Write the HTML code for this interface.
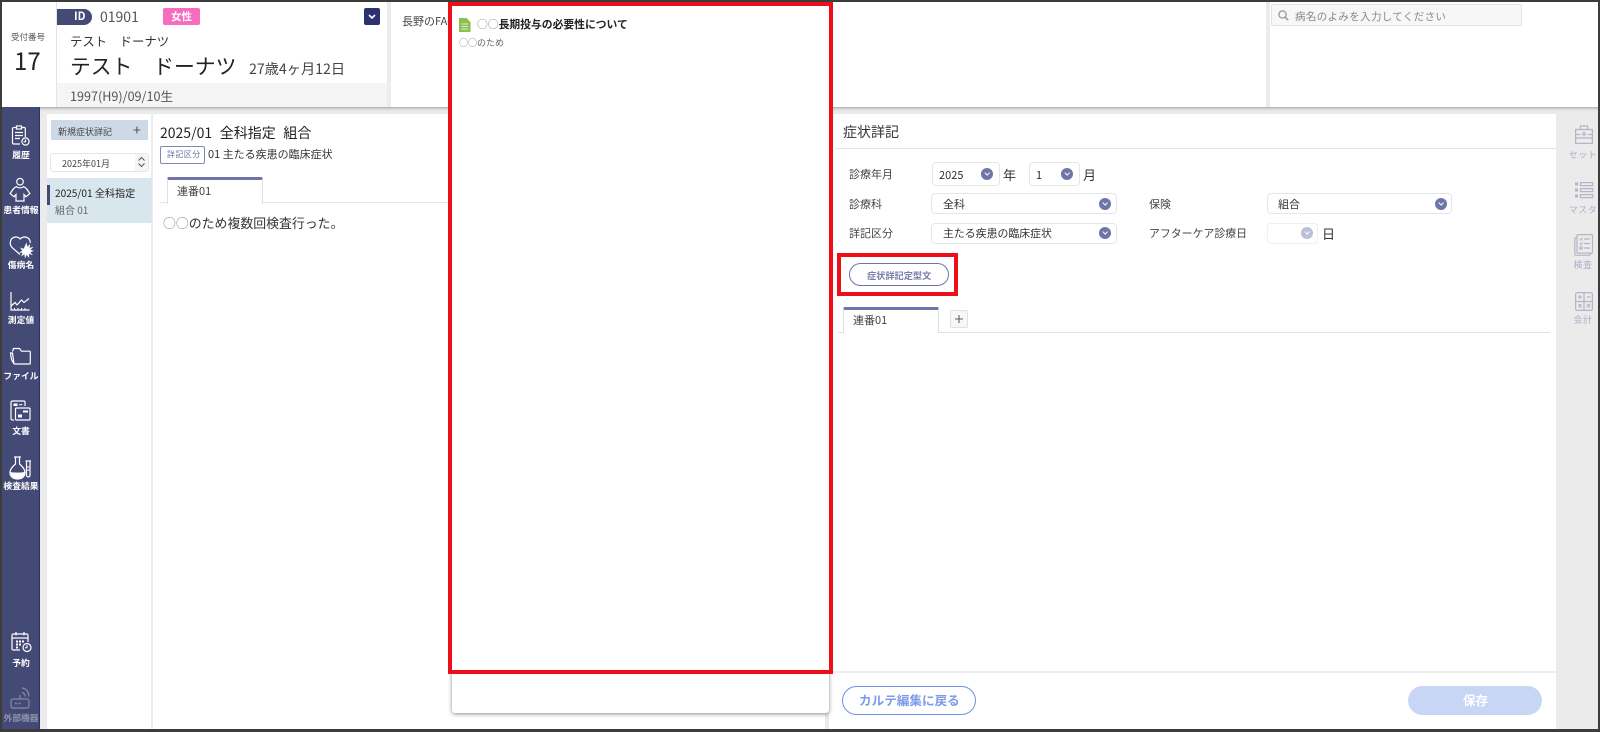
<!DOCTYPE html>
<html lang="ja"><head><meta charset="utf-8"><title>症状詳記</title>
<style>
html,body{margin:0;padding:0;width:1600px;height:732px;overflow:hidden;background:#ebebeb}
body{position:relative;font-family:"Noto Sans CJK JP","Liberation Sans",sans-serif;color:#333;filter:blur(.3px)}
.b{position:absolute;box-sizing:border-box}
.t{position:absolute;white-space:nowrap;line-height:1}
.s{position:absolute;box-sizing:border-box;background:#fff;border:1px solid #e6e6e6;border-radius:4px}
.c{position:absolute;width:12px;height:12px;border-radius:50%;background:#6f75a8}
.c:after{content:"";position:absolute;left:3.6px;top:2.6px;width:3.4px;height:3.4px;border:solid #fff;border-width:0 1.5px 1.5px 0;transform:rotate(45deg);box-sizing:content-box}
.n{position:absolute;left:2px;width:38px;text-align:center;color:#fff;font-size:8.8px;font-weight:700;line-height:1;white-space:nowrap}
.r{position:absolute;left:1562px;width:42px;text-align:center;color:#aeaccb;font-size:9px;line-height:1;white-space:nowrap;letter-spacing:.5px}
.o{color:#888;font-weight:400}
svg{position:absolute;overflow:visible}
.w{fill:none;stroke:#fff;stroke-width:1.2}
.g{fill:none;stroke:#b5b5c6;stroke-width:1.2}
</style></head><body>

<!-- right tools background (under header shadow) -->
<div class="b" style="left:1556px;top:107px;width:42px;height:623px;background:#ebebeb"></div>

<!-- header -->
<div class="b" style="left:0;top:0;width:1600px;height:107px;background:#fff;box-shadow:0 1px 3px rgba(0,0,0,.35)"></div>
<div class="b" style="left:56px;top:2px;width:1px;height:105px;background:#e4e4e4"></div>
<div class="b" style="left:57px;top:83px;width:330px;height:24px;background:#f5f5f5"></div>
<div class="b" style="left:387px;top:2px;width:4px;height:105px;background:#ececec"></div>
<div class="b" style="left:1266px;top:2px;width:4px;height:105px;background:#ececec"></div>

<div class="t" style="left:11px;top:33px;font-size:8.5px;color:#555">受付番号</div>
<div class="t" style="left:14px;top:48px;font-size:24px;color:#222">17</div>

<div class="b" style="left:57px;top:9px;width:35px;height:16px;background:#434a76;border-radius:0 8px 8px 0"></div>
<div class="t" style="left:74px;top:11px;font-size:11px;font-weight:700;color:#fff">ID</div>
<div class="t" style="left:100px;top:10px;font-size:14px;color:#555">01901</div>
<div class="b" style="left:163px;top:8px;width:37px;height:17px;background:#f76cc0;border-radius:2px"></div>
<div class="t" style="left:171px;top:12px;font-size:10.5px;font-weight:700;color:#fff">女性</div>
<div class="b" style="left:364px;top:8px;width:16px;height:17px;background:#2c3270;border-radius:2px"></div>
<svg style="left:364px;top:8px" width="16" height="17"><path d="M5 7l3 3 3-3" fill="none" stroke="#fff" stroke-width="1.6"/></svg>
<div class="t" style="left:70px;top:35px;font-size:12.4px;color:#333">テスト　ドーナツ</div>
<div class="t" style="left:70px;top:54.5px;font-size:20.8px;color:#222">テスト　ドーナツ</div>
<div class="t" style="left:249px;top:62px;font-size:14.2px;color:#444">27歳4ヶ月12日</div>
<div class="t" style="left:70px;top:90px;font-size:12.6px;color:#555">1997(H9)/09/10生</div>
<div class="t" style="left:402px;top:16px;font-size:11px;color:#444">長野のFAC</div>

<div class="b" style="left:1271px;top:4px;width:251px;height:22px;background:#f7f7f7;border:1px solid #e2e2e2;border-radius:2px"></div>
<svg style="left:1278px;top:10px" width="11" height="11"><circle cx="4.5" cy="4.5" r="3.6" fill="none" stroke="#999" stroke-width="1.3"/><path d="M7.2 7.2l3 3" stroke="#999" stroke-width="1.5"/></svg>
<div class="t" style="left:1295px;top:12px;font-size:10.5px;letter-spacing:.35px;color:#888">病名のよみを入力してください</div>

<!-- left sidebar -->
<div class="b" style="left:2px;top:107px;width:38px;height:623px;background:#434a76;border-right:1px solid #2c3270"></div>

<svg style="left:11px;top:124px" width="20" height="24" class="i"><path class="w" d="M3 3.500h2.500M10.500 3.500H13a1.300 1.300 0 0 1 1.300 1.300V13M9 20H2.800a1.300 1.300 0 0 1-1.300-1.300V4.800A1.300 1.300 0 0 1 2.800 3.500" /><rect class="w" x="5.500" y="2" width="5" height="3"/><path class="w" d="M4 8.500h8M4 11.500h8M4 14.500h5"/><circle class="w" cx="14.500" cy="17.500" r="3.600"/><path class="w" d="M14.500 15.500v2.300h-1.800" stroke-width="1"/></svg>
<div class="n" style="top:151px">履歴</div>

<svg style="left:9px;top:177px" width="22" height="26"><circle class="w" cx="11" cy="4.700" r="3.300"/><path class="w" d="M7.500 9.500C5 10.500 3.500 13 1.200 16.500L5 19.800 7 17.500V24h8v-6.500l2 2.300 3.800-3.300C18.500 13 17 10.500 14.500 9.500c-1 1.800-6 1.800-7 0z"/></svg>
<div class="n" style="top:206px">患者情報</div>

<svg style="left:9px;top:235px" width="26" height="26"><path class="w" d="M11 19.500 3 12.500C-.5 8.500 1.500 2.500 6.500 2c2.300-.2 3.700.7 4.700 2 1.300-1.500 3-2.300 5.500-1.900 3 .5 4.800 3 4.600 5.900"/><path d="M17.500 7.500l1 4.200 2.800-3-.8 4.200 4-1-3 3 3.500 1-3.700 1.300 2.700 3-4-1.300.2 4.300-2.500-3.500-1.700 3.800-.6-4.200-3.400 2.200 1.600-3.700-3.600-.3 3.300-1.800-2.300-3.200 3.700 1.200z" fill="#fff"/></svg>
<div class="n" style="top:261px">傷病名</div>

<svg style="left:10px;top:292px" width="20" height="19"><path class="w" d="M1 0v18h18.500"/><path class="w" d="M1 14l4-3.500 2 2.500 4.500-5 2.500 2.500 5-4"/><path d="M4.500 16v2M8 16v2M11.500 16v2M15 16v2" stroke="#fff" stroke-width="1"/></svg>
<div class="n" style="top:316px">測定値</div>

<svg style="left:9px;top:347px" width="22" height="18"><path class="w" d="M5 17h15.500a.8.8 0 0 0 .8-.8V5a.8.8 0 0 0-.8-.8H12.500L10.500 1.500H4.500L3.500 4.500"/><path class="w" d="M5 17 3.500 6H1.500L2.500 12.500 5 17"/></svg>
<div class="n" style="top:372px">ファイル</div>

<svg style="left:10px;top:400px" width="21" height="21"><path class="w" d="M4 20H2.300a1.300 1.300 0 0 1-1.300-1.300V2.300A1.300 1.300 0 0 1 2.300 1h11.400A1.300 1.300 0 0 1 15 2.300V6"/><rect x="3.500" y="3.500" width="4" height="2.500" fill="#fff"/><path d="M9 4.700h3.500" stroke="#fff"/><rect class="w" x="5.500" y="8" width="14.500" height="12" rx="1"/><rect x="8" y="14.500" width="4" height="3" fill="#fff"/><rect x="13" y="10.500" width="5" height="2" fill="#fff"/></svg>
<div class="n" style="top:427px">文書</div>

<svg style="left:9px;top:456px" width="23" height="24"><path class="w" d="M5 1h7M6.500 1v7C3.500 10.500 1 13 1 16.500c0 4 3 6.500 7.500 6.500s7.500-2.500 7.500-6.500c0-3.500-2.500-6-5.500-8.500V1"/><path d="M1.500 16c3 .8 11 .8 14 0 .3 4-3 6.500-7 6.500s-7.300-2.500-7-6.500z" fill="#fff"/><path class="w" d="M16.500 5h5.500M17.500 5v14.500a1.800 1.800 0 0 0 3.500 0V5"/><path d="M17.500 11h3.500M17.500 14h3.500" stroke="#fff"/></svg>
<div class="n" style="top:482px">検査結果</div>

<svg style="left:11px;top:632px" width="21" height="21"><path class="w" d="M9 18H2.300A1.300 1.300 0 0 1 1 16.700V3.300A1.300 1.300 0 0 1 2.300 2h13.400A1.300 1.300 0 0 1 17 3.300V10"/><path class="w" d="M1 6h16M5 0v3.500M13 0v3.500"/><path d="M5 8.500h2v2H5zM8 8.500h2v2H8zM11 8.500h2v2h-2zM5 11.500h2v2H5zM8 11.500h2v2H8zM5 14.500h2v2H5z" fill="#fff"/><circle class="w" cx="16" cy="15.500" r="4"/><path d="M16 13v2.700h-2" fill="none" stroke="#fff"/></svg>
<div class="n" style="top:659px">予約</div>

<svg style="left:10px;top:687px;opacity:.35" width="20" height="22"><rect class="w" x="1" y="12" width="18" height="9" rx="2"/><path class="w" d="M10 12V8M12 5.500c2 .5 3 2 3.200 4M12 1c4.500.5 6.500 4 6.800 8.500"/><path d="M5 16.500h2M8.500 16.500h2" stroke="#fff" stroke-width="1.500"/></svg>
<div class="n" style="top:714px;opacity:.4">外部機器</div>

<!-- list column -->
<div class="b" style="left:47px;top:114px;width:105px;height:615px;background:#fff;border-right:1px solid #ececec"></div>
<div class="b" style="left:51px;top:120px;width:97px;height:20px;background:#cdd9e6;border-radius:1px"></div>
<div class="t" style="left:58px;top:127px;font-size:9px;color:#444">新規症状詳記</div>
<div class="t" style="left:133px;top:123px;font-size:14px;color:#555">+</div>
<div class="s" style="left:50px;top:153px;width:99px;height:19px;border-radius:3px"></div>
<div class="t" style="left:62px;top:159px;font-size:9px;color:#444">2025年01月</div>
<div class="b" style="left:135px;top:154px;width:13px;height:17px;background:#f5f5f5"></div>
<svg style="left:137px;top:156px" width="9" height="12"><path d="M1.500 4.500 4.500 1.500l3 3M1.500 7.500l3 3 3-3" fill="none" stroke="#555" stroke-width="1"/></svg>
<div class="b" style="left:47px;top:178px;width:105px;height:45px;background:#d8e7ee"></div>
<div class="b" style="left:47px;top:185px;width:3px;height:20px;background:#434a76"></div>
<div class="t" style="left:55px;top:188px;font-size:10.1px;color:#222">2025/01 全科指定</div>
<div class="t" style="left:55px;top:205px;font-size:10px;color:#666">組合 01</div>

<!-- center panel -->
<div class="b" style="left:153px;top:114px;width:672px;height:615px;background:#fff"></div>
<div class="t" style="left:160px;top:126px;font-size:14px;color:#222;word-spacing:4.5px">2025/01 全科指定 組合</div>
<div class="b" style="left:160px;top:146px;width:45px;height:18px;border:1px solid #8387b3;border-radius:2px"></div>
<div class="t" style="left:167px;top:151px;font-size:8px;letter-spacing:.4px;color:#6f75a8">詳記区分</div>
<div class="t" style="left:208px;top:149px;font-size:11px;color:#333">01 主たる疾患の臨床症状</div>
<div class="b" style="left:160px;top:202px;width:290px;height:1px;background:#e6e6e6"></div>
<div class="b" style="left:167px;top:177px;width:96px;height:27px;background:#fff;border:1px solid #e0e0e0;border-bottom:0;border-top:3px solid #6f75a8;border-radius:2px 2px 0 0"></div>
<div class="t" style="left:177px;top:186px;font-size:11px;color:#444">連番01</div>
<div class="t" style="left:163px;top:217px;font-size:12.9px;color:#333"><span class="o">○○</span>のため複数回検査行った。</div>

<!-- right panel -->
<div class="b" style="left:829px;top:114px;width:727px;height:615px;background:#fff"></div>
<div class="t" style="left:843px;top:125px;font-size:14px;color:#333">症状詳記</div>
<div class="b" style="left:835px;top:148px;width:721px;height:1px;background:#e2e2e2"></div>

<div class="t" style="left:849px;top:169px;font-size:11px;color:#444">診療年月</div>
<div class="s" style="left:932px;top:162px;width:68px;height:24px"></div>
<div class="t" style="left:939px;top:170px;font-size:11px;color:#333">2025</div>
<div class="c" style="left:981px;top:168px"></div>
<div class="t" style="left:1003px;top:168px;font-size:13px;color:#333">年</div>
<div class="s" style="left:1029px;top:162px;width:51px;height:24px"></div>
<div class="t" style="left:1036px;top:170px;font-size:11px;color:#333">1</div>
<div class="c" style="left:1061px;top:168px"></div>
<div class="t" style="left:1083px;top:168px;font-size:13px;color:#333">月</div>

<div class="t" style="left:849px;top:199px;font-size:11px;color:#444">診療科</div>
<div class="s" style="left:931px;top:193px;width:186px;height:21px"></div>
<div class="t" style="left:943px;top:199px;font-size:11px;color:#333">全科</div>
<div class="c" style="left:1099px;top:198px"></div>
<div class="t" style="left:1149px;top:199px;font-size:11px;color:#444">保険</div>
<div class="s" style="left:1267px;top:193px;width:185px;height:21px"></div>
<div class="t" style="left:1278px;top:199px;font-size:11px;color:#333">組合</div>
<div class="c" style="left:1435px;top:198px"></div>

<div class="t" style="left:849px;top:228px;font-size:11px;color:#444">詳記区分</div>
<div class="s" style="left:931px;top:223px;width:186px;height:21px"></div>
<div class="t" style="left:943px;top:228px;font-size:10.9px;color:#333">主たる疾患の臨床症状</div>
<div class="c" style="left:1099px;top:227px"></div>
<div class="t" style="left:1149px;top:228px;font-size:10.9px;color:#444">アフターケア診療日</div>
<div class="s" style="left:1267px;top:223px;width:51px;height:21px;border-color:#f0f0f0"></div>
<div class="c" style="left:1301px;top:227px;background:#bcbfd8"></div>
<div class="t" style="left:1322px;top:227px;font-size:13px;color:#333">日</div>

<div class="b" style="left:849px;top:263px;width:100px;height:23px;border:1.5px solid #6f75a8;border-radius:12px"></div>
<div class="t" style="left:867px;top:271px;font-size:9.2px;font-weight:700;color:#7b80ab">症状詳記定型文</div>

<div class="b" style="left:838px;top:332px;width:712px;height:1px;background:#e2e2e2"></div>
<div class="b" style="left:843px;top:307px;width:96px;height:26px;background:#fff;border:1px solid #e0e0e0;border-bottom:0;border-top:3px solid #6f75a8;border-radius:2px 2px 0 0"></div>
<div class="t" style="left:853px;top:315px;font-size:11px;color:#444">連番01</div>
<div class="b" style="left:950px;top:310px;width:18px;height:18px;background:#f7f7f7;border:1px solid #e2e2e2;border-radius:2px"></div>
<svg style="left:950px;top:310px" width="18" height="18"><path d="M9 5v8M5 9h8" stroke="#666" stroke-width="1.100"/></svg>

<div class="b" style="left:829px;top:671px;width:727px;height:2px;background:#eeeeee"></div>
<div class="b" style="left:842px;top:686px;width:134px;height:29px;background:#fff;border:1.5px solid #6c93e8;border-radius:15px"></div>
<div class="t" style="left:859px;top:694px;font-size:12.6px;font-weight:700;color:#7d9be6">カルテ編集に戻る</div>
<div class="b" style="left:1408px;top:686px;width:134px;height:29px;background:#c8d6f5;border-radius:15px"></div>
<div class="t" style="left:1463px;top:694px;font-size:12.500px;font-weight:700;color:#fff">保存</div>

<!-- right tools -->
<svg style="left:1575px;top:125px" width="18" height="19"><path class="g" d="M.6 4.500h16.800v13.900H.6zM5.500 4.500V1h7v3.500M.6 9.500h4.500M13 9.500h4.400M.6 13h16.800"/><path d="M9 6.500v5M6.500 9h5" stroke="#b5b5c6" stroke-width="1.300"/></svg>
<div class="r" style="top:150px">セット</div>
<svg style="left:1575px;top:182px" width="18" height="17"><path d="M0 .5h3v3H0zM0 6.500h3v3H0zM0 12.500h3v3H0z" fill="#b5b5c6"/><rect class="g" x="5.500" y=".6" width="12.200" height="3"/><rect class="g" x="5.500" y="6.600" width="12.200" height="3"/><rect class="g" x="5.500" y="12.600" width="12.200" height="3"/></svg>
<div class="r" style="top:205px">マスタ</div>
<svg style="left:1574px;top:234px" width="19" height="22"><path class="g" d="M3 2.500.8 4.500v15.800a1 1 0 0 0 1 1h13.500l2-2"/><rect class="g" x="3" y=".6" width="15.500" height="18.500" rx="1"/><path class="g" d="M6 5l1 1 1.500-2M10 5h6M6 9.500l1 1 1.500-2M10 9.500h6M10 14h6"/><circle class="g" cx="7" cy="14" r="1.300"/></svg>
<div class="r" style="top:260px">検査</div>
<svg style="left:1575px;top:292px" width="18" height="19"><rect class="g" x=".6" y=".6" width="16.800" height="17.800" rx="1.500"/><path class="g" d="M9 .6v17.800M.6 9.500h16.800M12 5h3.500M3 5h4M5 3v4M3.500 12l3 3.500M6.500 12l-3 3.500M12 12l3 3.500M15 12l-3 3.500"/></svg>
<div class="r" style="top:315px">会計</div>

<!-- popup -->
<div class="b" style="left:452px;top:2px;width:377px;height:711px;background:#fff;border-radius:0 0 3px 3px;box-shadow:0 1px 4px rgba(0,0,0,.45)"></div>
<svg style="left:459px;top:18px" width="12" height="14"><path d="M0 0h7.500L11.500 4v10H0z" fill="#8cc152"/><path d="M2.500 6h6.500M2.500 8.500h6.500M2.500 11h6.500" stroke="#dcefc5" stroke-width="1"/></svg>
<div class="t" style="left:477px;top:19px;font-size:10.8px;font-weight:700;color:#222"><span class="o">○○</span>長期投与の必要性について</div>
<div class="t" style="left:459px;top:38px;font-size:9px;color:#666"><span class="o">○○</span>のため</div>

<!-- red annotations -->
<div class="b" style="left:448px;top:2px;width:385px;height:672px;border:4px solid #ec0f1a"></div>
<div class="b" style="left:837px;top:253px;width:121px;height:43px;border:4px solid #ec0f1a"></div>

<!-- screen frame -->
<div class="b" style="left:0;top:0;width:1600px;height:2px;background:#3c3c3c"></div>
<div class="b" style="left:0;top:0;width:2px;height:732px;background:#3c3c3c"></div>
<div class="b" style="left:1598px;top:0;width:2px;height:732px;background:#3c3c3c"></div>
<div class="b" style="left:0;top:729px;width:1600px;height:3px;background:#3c3c3c"></div>
</body></html>
